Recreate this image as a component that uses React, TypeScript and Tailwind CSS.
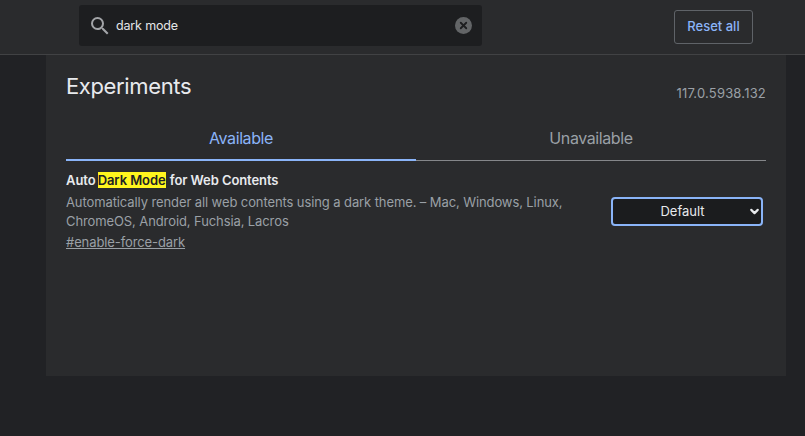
import { ChevronDown, X } from "lucide-react";

const font = "font-['Inter','Liberation_Sans',sans-serif]";

function Header() {
  return (
    <header className="flex h-[55px] items-center border-b border-[#414244] bg-[#2a2b2d] pl-[79px] pr-[52px]">
      <div className="mb-[3px] flex h-[41px] w-[403px] items-center rounded-[3px] bg-[#1d1e20] pl-[9px] pr-[10px]">
        <svg viewBox="0 0 24 24" className="h-[24px] w-[24px] fill-[#a3a5a8]">
          <path d="M15.5 14h-.79l-.28-.27A6.471 6.471 0 0 0 16 9.5 6.5 6.5 0 1 0 9.5 16c1.61 0 3.09-.59 4.23-1.57l.27.28v.79l5 4.99L20.49 19l-4.99-5zm-6 0C7.01 14 5 11.99 5 9.5S7.01 5 9.5 5 14 7.01 14 9.5 11.99 14 9.5 14z" />
        </svg>
        <span className="ml-[4px] flex-1 pt-[1px] text-[12.5px] tracking-[-0.15px] text-[#e4e5e7]">dark mode</span>
        <span className="flex h-[17px] w-[17px] items-center justify-center rounded-full bg-[#636567]">
          <X className="h-[11px] w-[11px] text-[#1d1e20]" strokeWidth={4} />
        </span>
      </div>
      <button className="mb-[1px] ml-auto h-[34px] w-[79px] rounded-[3px] border border-[#5f6368] text-[13px] font-medium text-[#8ab4f8]">
        Reset all
      </button>
    </header>
  );
}

function Experiment() {
  return (
    <div className="mt-[9px] flex items-start justify-between">
      <div className="w-[510px]">
        <h2 className="text-[13px] font-semibold leading-[20px] tracking-[-0.08px] text-[#e8eaed]">
          Auto <mark className="-ml-[1px] mr-[1px] bg-[#fff51e] text-[#202124]">Dark Mode</mark> for Web Contents
        </h2>
        <p className="mt-[3px] text-[13px] leading-[19px] tracking-[-0.1px] text-[#9aa0a6]">
          Automatically render all web contents using a dark theme. – Mac, Windows, Linux, ChromeOS, Android, Fuchsia, Lacros
        </p>
        <a className="mt-[1px] block text-[13px] leading-[20px] tracking-[-0.1px] text-[#9aa0a6] underline">#enable-force-dark</a>
      </div>
      <div className="mr-[3px] mt-[27px] flex h-[29px] w-[152px] items-center rounded-[4px] border-2 border-[#8ab4f8] bg-[#1b1c1e]">
        <span className="flex-1 pl-[4px] text-center text-[13px] text-[#e8eaed]">Default</span>
        <ChevronDown className="h-[13px] w-[13px] text-[#e8eaed]" strokeWidth={4} />
      </div>
    </div>
  );
}

export default function App() {
  return (
    <div className={`h-[436px] w-[805px] overflow-hidden bg-[#212225] ${font}`}>
      <Header />
      <main className="ml-[46px] h-[321px] w-[740px] bg-[#2a2b2d] px-[20px]">
        <div className="flex items-start justify-between">
          <h1 className="mt-[15px] text-[22px] leading-[32px] tracking-[-0.36px] text-[#e8eaed]">Experiments</h1>
          <span className="mt-[29px] text-[13px] leading-[18px] tracking-[0.2px] text-[#9aa0a6]">117.0.5938.132</span>
        </div>
        <div className="mt-[25px] grid grid-cols-2 text-center text-[16px] leading-[22px] tracking-[-0.4px]">
          <div className="border-b-2 border-[#8ab4f8] pb-[10px] text-[#8ab4f8]">Available</div>
          <div className="border-b border-[#85878a] pb-[11px] text-[#9aa0a6]">Unavailable</div>
        </div>
        <Experiment />
      </main>
    </div>
  );
}
